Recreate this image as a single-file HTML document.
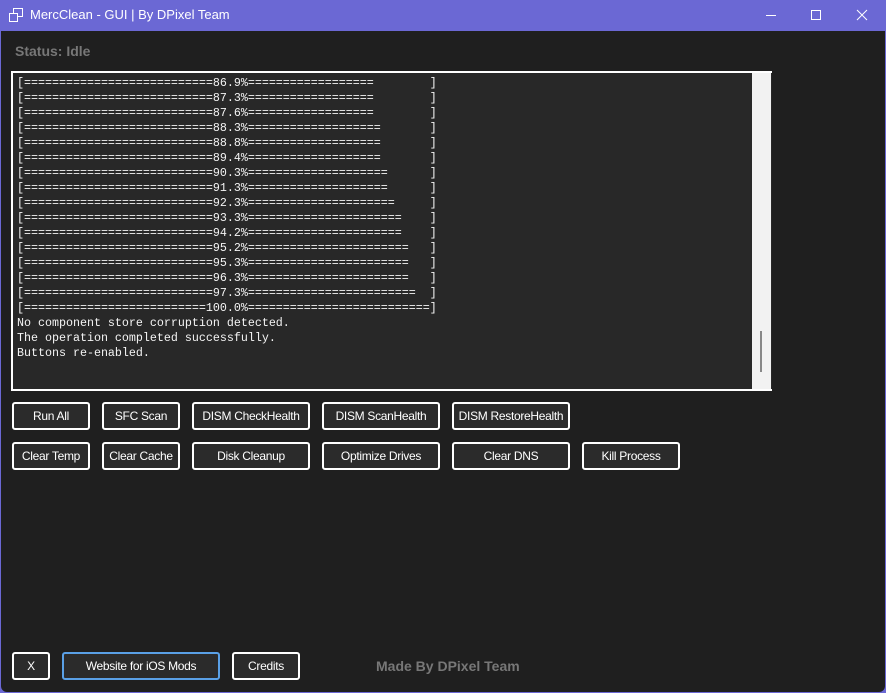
<!DOCTYPE html>
<html><head><meta charset="utf-8"><style>
*{margin:0;padding:0;box-sizing:border-box}
body{width:886px;height:693px;background:#6b68d4;overflow:hidden;font-family:"Liberation Sans",sans-serif;position:relative}
.title{position:absolute;left:0;top:0;width:886px;height:31px;background:#6b68d4;color:#fff;font-size:13px}
.win{position:absolute;left:1px;top:31px;width:884px;height:661px;background:#1f1f1f;border-radius:0 0 6px 6px}
.status{position:absolute;left:15px;top:43px;font-size:14px;font-weight:bold;color:#777}
.box{position:absolute;left:11px;top:71px;width:761px;height:320px;background:#282828;border:2px solid #fff;border-right:none;overflow:hidden}
.sb{position:absolute;left:752px;top:73px;width:19px;height:316px;background:#f2f2f2}
.thumb{position:absolute;left:760px;top:331px;width:2px;height:41px;background:#888}
pre{position:absolute;left:17px;top:76px;font-family:"Liberation Mono",monospace;font-size:11.67px;line-height:15px;color:#f4f4f4}
.b{position:absolute;height:28px;background:#2b2b2b;border:2px solid #fff;border-radius:3px;color:#fff;font-size:12px;text-align:center;line-height:24px;white-space:nowrap;letter-spacing:-0.3px}
.made{position:absolute;left:376px;top:658px;font-size:14px;font-weight:bold;color:#777}
</style></head><body>
<div class="title">
<svg style="position:absolute;left:9px;top:8px" width="14" height="14" viewBox="0 0 14 14"><rect x="4.5" y="0.5" width="9" height="8" fill="none" stroke="#fff"/><rect x="0.5" y="5.5" width="8" height="8" fill="#6b68d4" stroke="#fff"/></svg>
<span style="position:absolute;left:30px;top:7px">MercClean - GUI | By DPixel Team</span>
<svg style="position:absolute;left:760px;top:8px" width="110" height="16" viewBox="0 0 110 16"><line x1="6" y1="7.5" x2="16" y2="7.5" stroke="#fff"/><rect x="51.5" y="2.5" width="9" height="9" fill="none" stroke="#fff"/><path d="M97 2 L107 12 M107 2 L97 12" stroke="#fff"/></svg>
</div>
<div class="win"></div>
<div class="status">Status: Idle</div>
<div class="box"></div>
<div class="sb"></div><div class="thumb"></div>
<pre>[===========================86.9%==================        ]
[===========================87.3%==================        ]
[===========================87.6%==================        ]
[===========================88.3%===================       ]
[===========================88.8%===================       ]
[===========================89.4%===================       ]
[===========================90.3%====================      ]
[===========================91.3%====================      ]
[===========================92.3%=====================     ]
[===========================93.3%======================    ]
[===========================94.2%======================    ]
[===========================95.2%=======================   ]
[===========================95.3%=======================   ]
[===========================96.3%=======================   ]
[===========================97.3%========================  ]
[==========================100.0%==========================]
No component store corruption detected.
The operation completed successfully.
Buttons re-enabled.</pre>
<div class="b" style="left:12px;top:402px;width:78px">Run All</div>
<div class="b" style="left:102px;top:402px;width:78px">SFC Scan</div>
<div class="b" style="left:192px;top:402px;width:118px">DISM CheckHealth</div>
<div class="b" style="left:322px;top:402px;width:118px">DISM ScanHealth</div>
<div class="b" style="left:452px;top:402px;width:118px">DISM RestoreHealth</div>
<div class="b" style="left:12px;top:442px;width:78px">Clear Temp</div>
<div class="b" style="left:102px;top:442px;width:78px">Clear Cache</div>
<div class="b" style="left:192px;top:442px;width:118px">Disk Cleanup</div>
<div class="b" style="left:322px;top:442px;width:118px">Optimize Drives</div>
<div class="b" style="left:452px;top:442px;width:118px">Clear DNS</div>
<div class="b" style="left:582px;top:442px;width:98px">Kill Process</div>
<div class="b" style="left:12px;top:652px;width:38px">X</div>
<div class="b" style="left:62px;top:652px;width:158px;border-color:#5aa0e6">Website for iOS Mods</div>
<div class="b" style="left:232px;top:652px;width:68px">Credits</div>
<div class="made">Made By DPixel Team</div>
</body></html>
